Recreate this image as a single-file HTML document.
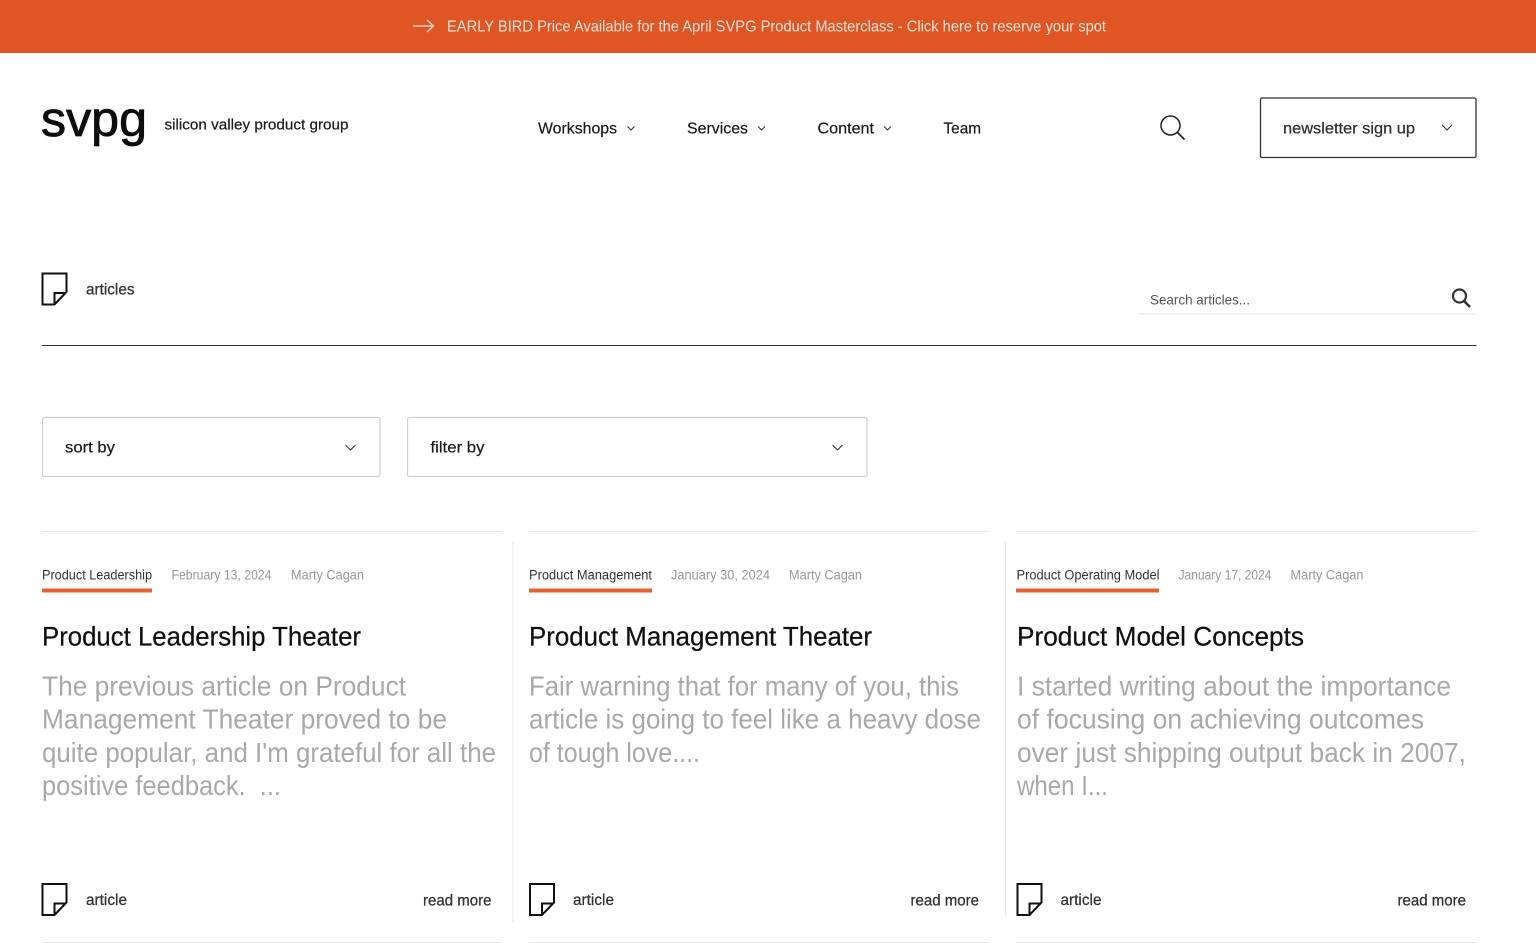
<!DOCTYPE html>
<html lang="en">
<head>
<meta charset="utf-8">
<title>SVPG Articles</title>
<style>
html,body{margin:0;padding:0;background:#fff;width:1536px;height:945px;overflow:hidden}
svg{display:block;position:absolute;left:0;top:0;filter:blur(.35px)}
text{font-family:"Liberation Sans",sans-serif;fill:#1c1c1c;white-space:pre}
.med{stroke:#1c1c1c;stroke-width:.22}
.b{fill:#fbe3d9;font-size:16px}
.nav{font-size:16px}
.tag{font-size:13.5px;fill:#333}
.meta{font-size:13.5px;fill:#999}
.title{font-size:27px;fill:#111;stroke:#111;stroke-width:.25}
.body{font-size:27.5px;fill:#a9a9a9}
.foot{font-size:15.5px;fill:#333}
.ic{fill:none;stroke:#111;stroke-width:2}
.chev{fill:none;stroke:#333;stroke-width:1.1}
</style>
</head>
<body>
<svg width="1536" height="945" viewBox="0 0 1536 945">
<defs>
<g id="doc"><path class="ic" d="M43 1H67V19.500L55 32H43Z"/><path class="ic" d="M55 32V20.500H66"/></g>
</defs>
<rect x="0" y="0" width="1536" height="53" fill="#df5524"/>
<path d="M413 26H433M427 20L433.500 26L427 32" fill="none" stroke="#fbe3d9" stroke-width="1.300"/>
<text class="b" x="447" y="31.500" textLength="659" lengthAdjust="spacingAndGlyphs">EARLY BIRD Price Available for the April SVPG Product Masterclass - Click here to reserve your spot</text>

<text x="41" y="136" font-size="49" textLength="106" lengthAdjust="spacingAndGlyphs" style="fill:#0c0c0c;stroke:#0c0c0c;stroke-width:.8">svpg</text>
<text class="med" x="164.500" y="129.500" font-size="14.500" textLength="184" lengthAdjust="spacingAndGlyphs">silicon valley product group</text>

<text class="nav med" x="538" y="133.500" textLength="79" lengthAdjust="spacingAndGlyphs">Workshops</text>
<path class="chev" d="M627.500 126.500L631 130L634.500 126.500"/>
<text class="nav med" x="687" y="133.500" textLength="61" lengthAdjust="spacingAndGlyphs">Services</text>
<path class="chev" d="M758 126.500L761.500 130L765 126.500"/>
<text class="nav med" x="817.500" y="133.500" textLength="56.500" lengthAdjust="spacingAndGlyphs">Content</text>
<path class="chev" d="M884 126.500L887.500 130L891 126.500"/>
<text class="nav med" x="943.500" y="133.500" textLength="37.500" lengthAdjust="spacingAndGlyphs">Team</text>

<circle cx="1170.500" cy="125.500" r="9.500" fill="none" stroke="#222" stroke-width="1.500"/>
<path d="M1177.500 132.500L1184.500 139.500" fill="none" stroke="#222" stroke-width="1.700"/>

<rect x="1260.500" y="98" width="215.500" height="59.500" rx="1.500" fill="#fff" stroke="#333" stroke-width="1.300"/>
<text class="med" x="1283" y="133.500" font-size="15.500" textLength="132" lengthAdjust="spacingAndGlyphs" style="fill:#333">newsletter sign up</text>
<path class="chev" d="M1442 125L1447 130L1452 125"/>

<use href="#doc" x="-0.500" y="272.500"/>
<text class="foot med" x="86" y="294.500" textLength="48.500" lengthAdjust="spacingAndGlyphs">articles</text>

<text x="1150" y="304.500" font-size="14" textLength="100" lengthAdjust="spacingAndGlyphs" style="fill:#555">Search articles...</text>
<circle cx="1459.500" cy="296" r="6.500" fill="none" stroke="#333" stroke-width="2.200"/>
<path d="M1464 301L1470 307" fill="none" stroke="#333" stroke-width="2.600"/>
<rect x="1138" y="313.500" width="338.500" height="1" fill="#e9e9e9"/>
<rect x="42" y="345" width="1434.500" height="1" fill="#333"/>

<rect x="42.500" y="417.500" width="337.500" height="59" rx="2" fill="#fff" stroke="#d0d0d0" stroke-width="1.200"/>
<text class="med" x="65" y="452.500" font-size="15.500" textLength="50" lengthAdjust="spacingAndGlyphs">sort by</text>
<path class="chev" d="M345.500 445L350.500 450L355.500 445"/>
<rect x="407.500" y="417.500" width="459.500" height="59" rx="2" fill="#fff" stroke="#d0d0d0" stroke-width="1.200"/>
<text class="med" x="430.500" y="452.500" font-size="15.500" textLength="54" lengthAdjust="spacingAndGlyphs">filter by</text>
<path class="chev" d="M832.500 445L837.500 450L842.500 445"/>

<g fill="#e8e8e8">
<rect x="42" y="531" width="460" height="1"/>
<rect x="529" y="531" width="460" height="1"/>
<rect x="1016" y="531" width="460.500" height="1"/>
<rect x="42" y="942" width="460" height="1"/>
<rect x="529" y="942" width="460" height="1"/>
<rect x="1016" y="942" width="460.500" height="1"/>
<rect x="512.500" y="542" width="1" height="380"/>
<rect x="1005" y="542" width="1" height="373"/>
</g>

<!-- column 1 -->
<text class="tag" x="42" y="579.500" textLength="110" lengthAdjust="spacingAndGlyphs">Product Leadership</text>
<text class="meta" x="171.500" y="579.500" textLength="100" lengthAdjust="spacingAndGlyphs">February 13, 2024</text>
<text class="meta" x="291" y="579.500" textLength="73" lengthAdjust="spacingAndGlyphs">Marty Cagan</text>
<rect x="42" y="588.500" width="110" height="4" fill="#e5622f"/>
<text class="title" x="42" y="645.500" textLength="319" lengthAdjust="spacingAndGlyphs">Product Leadership Theater</text>
<text class="body" x="42" y="695.500" textLength="364" lengthAdjust="spacingAndGlyphs">The previous article on Product</text>
<text class="body" x="42" y="728.500" textLength="405" lengthAdjust="spacingAndGlyphs">Management Theater proved to be</text>
<text class="body" x="42" y="762" textLength="454" lengthAdjust="spacingAndGlyphs">quite popular, and I'm grateful for all the</text>
<text class="body" x="42" y="795" textLength="239" lengthAdjust="spacingAndGlyphs">positive feedback.  ...</text>
<use href="#doc" x="-0.500" y="883"/>
<text class="foot med" x="86" y="905" textLength="41" lengthAdjust="spacingAndGlyphs">article</text>
<text class="foot med" x="423" y="905.500" textLength="68.500" lengthAdjust="spacingAndGlyphs">read more</text>

<!-- column 2 -->
<text class="tag" x="529" y="579.500" textLength="123" lengthAdjust="spacingAndGlyphs">Product Management</text>
<text class="meta" x="671" y="579.500" textLength="99" lengthAdjust="spacingAndGlyphs">January 30, 2024</text>
<text class="meta" x="789" y="579.500" textLength="73" lengthAdjust="spacingAndGlyphs">Marty Cagan</text>
<rect x="529" y="588.500" width="123" height="4" fill="#e5622f"/>
<text class="title" x="529" y="645.500" textLength="343" lengthAdjust="spacingAndGlyphs">Product Management Theater</text>
<text class="body" x="529" y="695.500" textLength="430" lengthAdjust="spacingAndGlyphs">Fair warning that for many of you, this</text>
<text class="body" x="529" y="728.500" textLength="452" lengthAdjust="spacingAndGlyphs">article is going to feel like a heavy dose</text>
<text class="body" x="529" y="762" textLength="171" lengthAdjust="spacingAndGlyphs">of tough love....</text>
<use href="#doc" x="487" y="883"/>
<text class="foot med" x="573" y="905" textLength="41" lengthAdjust="spacingAndGlyphs">article</text>
<text class="foot med" x="910.500" y="905.500" textLength="68.500" lengthAdjust="spacingAndGlyphs">read more</text>

<!-- column 3 -->
<text class="tag" x="1016.500" y="579.500" textLength="143" lengthAdjust="spacingAndGlyphs">Product Operating Model</text>
<text class="meta" x="1178.500" y="579.500" textLength="93" lengthAdjust="spacingAndGlyphs">January 17, 2024</text>
<text class="meta" x="1290.500" y="579.500" textLength="73" lengthAdjust="spacingAndGlyphs">Marty Cagan</text>
<rect x="1016" y="588.500" width="143" height="4" fill="#e5622f"/>
<text class="title" x="1017" y="645.500" textLength="287" lengthAdjust="spacingAndGlyphs">Product Model Concepts</text>
<text class="body" x="1017" y="695.500" textLength="434" lengthAdjust="spacingAndGlyphs">I started writing about the importance</text>
<text class="body" x="1017" y="728.500" textLength="407" lengthAdjust="spacingAndGlyphs">of focusing on achieving outcomes</text>
<text class="body" x="1017" y="762" textLength="449" lengthAdjust="spacingAndGlyphs">over just shipping output back in 2007,</text>
<text class="body" x="1017" y="795" textLength="91" lengthAdjust="spacingAndGlyphs">when I...</text>
<use href="#doc" x="974.500" y="883"/>
<text class="foot med" x="1060.500" y="905" textLength="41" lengthAdjust="spacingAndGlyphs">article</text>
<text class="foot med" x="1397.500" y="905.500" textLength="68.500" lengthAdjust="spacingAndGlyphs">read more</text>
</svg>
</body>
</html>
